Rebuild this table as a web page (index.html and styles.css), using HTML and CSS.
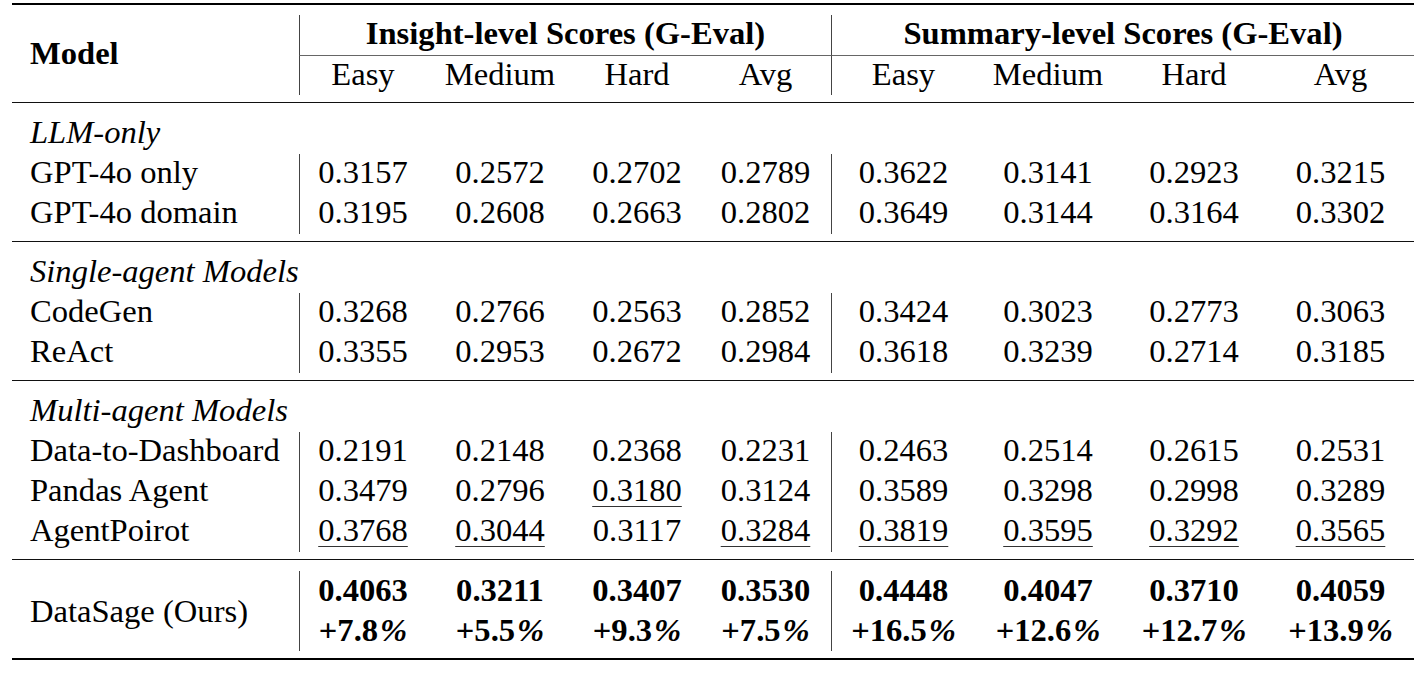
FILE: index.html
```html
<!DOCTYPE html>
<html lang="en">
<head>
<meta charset="utf-8">
<title>G-Eval scores</title>
<link rel="stylesheet" href="styles.css">
</head>
<body>
<div class="table">
  <div class="head">
    <div class="model">Model</div>
    <div class="group">Insight-level Scores (G-Eval)</div>
    <div class="group">Summary-level Scores (G-Eval)</div>
    <div class="sub sep">Easy</div>
    <div class="sub">Medium</div>
    <div class="sub">Hard</div>
    <div class="sub">Avg</div>
    <div class="sub sep">Easy</div>
    <div class="sub">Medium</div>
    <div class="sub">Hard</div>
    <div class="sub">Avg</div>
  </div>

  <div class="section">
    <div class="label">LLM-only</div>
    <div class="row">
      <div class="name">GPT-4o only</div>
      <div class="num sep">0.3157</div><div class="num">0.2572</div><div class="num">0.2702</div><div class="num">0.2789</div>
      <div class="num sep">0.3622</div><div class="num">0.3141</div><div class="num">0.2923</div><div class="num">0.3215</div>
    </div>
    <div class="row">
      <div class="name">GPT-4o domain</div>
      <div class="num sep">0.3195</div><div class="num">0.2608</div><div class="num">0.2663</div><div class="num">0.2802</div>
      <div class="num sep">0.3649</div><div class="num">0.3144</div><div class="num">0.3164</div><div class="num">0.3302</div>
    </div>
  </div>

  <div class="section">
    <div class="label">Single-agent Models</div>
    <div class="row">
      <div class="name">CodeGen</div>
      <div class="num sep">0.3268</div><div class="num">0.2766</div><div class="num">0.2563</div><div class="num">0.2852</div>
      <div class="num sep">0.3424</div><div class="num">0.3023</div><div class="num">0.2773</div><div class="num">0.3063</div>
    </div>
    <div class="row">
      <div class="name">ReAct</div>
      <div class="num sep">0.3355</div><div class="num">0.2953</div><div class="num">0.2672</div><div class="num">0.2984</div>
      <div class="num sep">0.3618</div><div class="num">0.3239</div><div class="num">0.2714</div><div class="num">0.3185</div>
    </div>
  </div>

  <div class="section">
    <div class="label">Multi-agent Models</div>
    <div class="row">
      <div class="name">Data-to-Dashboard</div>
      <div class="num sep">0.2191</div><div class="num">0.2148</div><div class="num">0.2368</div><div class="num">0.2231</div>
      <div class="num sep">0.2463</div><div class="num">0.2514</div><div class="num">0.2615</div><div class="num">0.2531</div>
    </div>
    <div class="row">
      <div class="name">Pandas Agent</div>
      <div class="num sep">0.3479</div><div class="num">0.2796</div><div class="num"><span class="ul">0.3180</span></div><div class="num">0.3124</div>
      <div class="num sep">0.3589</div><div class="num">0.3298</div><div class="num">0.2998</div><div class="num">0.3289</div>
    </div>
    <div class="row">
      <div class="name">AgentPoirot</div>
      <div class="num sep"><span class="ul">0.3768</span></div><div class="num"><span class="ul">0.3044</span></div><div class="num">0.3117</div><div class="num"><span class="ul">0.3284</span></div>
      <div class="num sep"><span class="ul">0.3819</span></div><div class="num"><span class="ul">0.3595</span></div><div class="num"><span class="ul">0.3292</span></div><div class="num"><span class="ul">0.3565</span></div>
    </div>
  </div>

  <div class="section last">
    <div class="ours">
      <div class="name tall">DataSage (Ours)</div>
      <div class="num sep best">0.4063</div><div class="num best">0.3211</div><div class="num best">0.3407</div><div class="num best">0.3530</div>
      <div class="num sep best">0.4448</div><div class="num best">0.4047</div><div class="num best">0.3710</div><div class="num best">0.4059</div>
      <div class="num sep best">+7.8<span class="pct">%</span></div><div class="num best">+5.5<span class="pct">%</span></div><div class="num best">+9.3<span class="pct">%</span></div><div class="num best">+7.5<span class="pct">%</span></div>
      <div class="num sep best">+16.5<span class="pct">%</span></div><div class="num best">+12.6<span class="pct">%</span></div><div class="num best">+12.7<span class="pct">%</span></div><div class="num best">+13.9<span class="pct">%</span></div>
    </div>
  </div>
</div>
</body>
</html>
```

FILE: styles.css
```css
html, body {
  margin: 0;
  padding: 0;
  background: #fff;
}

.table {
  --cols: 287px 127px 148px 126px 131px 144px 146px 146px 147px;
  width: 1402px;
  margin: 3px 0 0 12px;
  border-top: 2px solid #000;
  border-bottom: 2px solid #000;
  font-family: "Liberation Serif", "Times New Roman", serif;
  font-size: 32.6px;
  line-height: 40px;
  color: #000;
}

.head {
  display: grid;
  grid-template-columns: var(--cols);
  grid-template-rows: 41px 39px;
  padding: 10px 0 7px;
  border-bottom: 1px solid #111;
}

.model {
  grid-row: 1 / 3;
  grid-column: 1;
  align-self: center;
  padding-left: 18px;
  font-weight: bold;
  margin-top: -4px;
}

.group {
  grid-column: span 4;
  text-align: center;
  font-weight: bold;
  border-left: 1px solid #444;
  border-bottom: 1px solid #666;
  line-height: 36px;
}

.sub {
  text-align: center;
  line-height: 37px;
}

.sep {
  border-left: 1px solid #444;
}

.section {
  padding: 11px 0 7px;
  border-bottom: 1px solid #111;
}

.section.last {
  border-bottom: none;
}

.label {
  font-style: italic;
  padding-left: 18px;
  height: 40px;
  line-height: 37px;
}

.row {
  display: grid;
  grid-template-columns: var(--cols);
  height: 40px;
  line-height: 36px;
}

.name {
  padding-left: 18px;
  white-space: nowrap;
}

.num {
  text-align: center;
  white-space: nowrap;
}

.ul {
  text-decoration: underline;
  text-decoration-thickness: 1px;
  text-underline-offset: 5px;
  text-decoration-color: #333;
}

.ours {
  display: grid;
  grid-template-columns: var(--cols);
  grid-template-rows: 40px 40px;
  line-height: 38px;
}

.tall {
  grid-row: 1 / 3;
  grid-column: 1;
  align-self: center;
}

.best {
  font-weight: bold;
}

.pct {
  font-style: italic;
  margin-left: 2px;
}
```
